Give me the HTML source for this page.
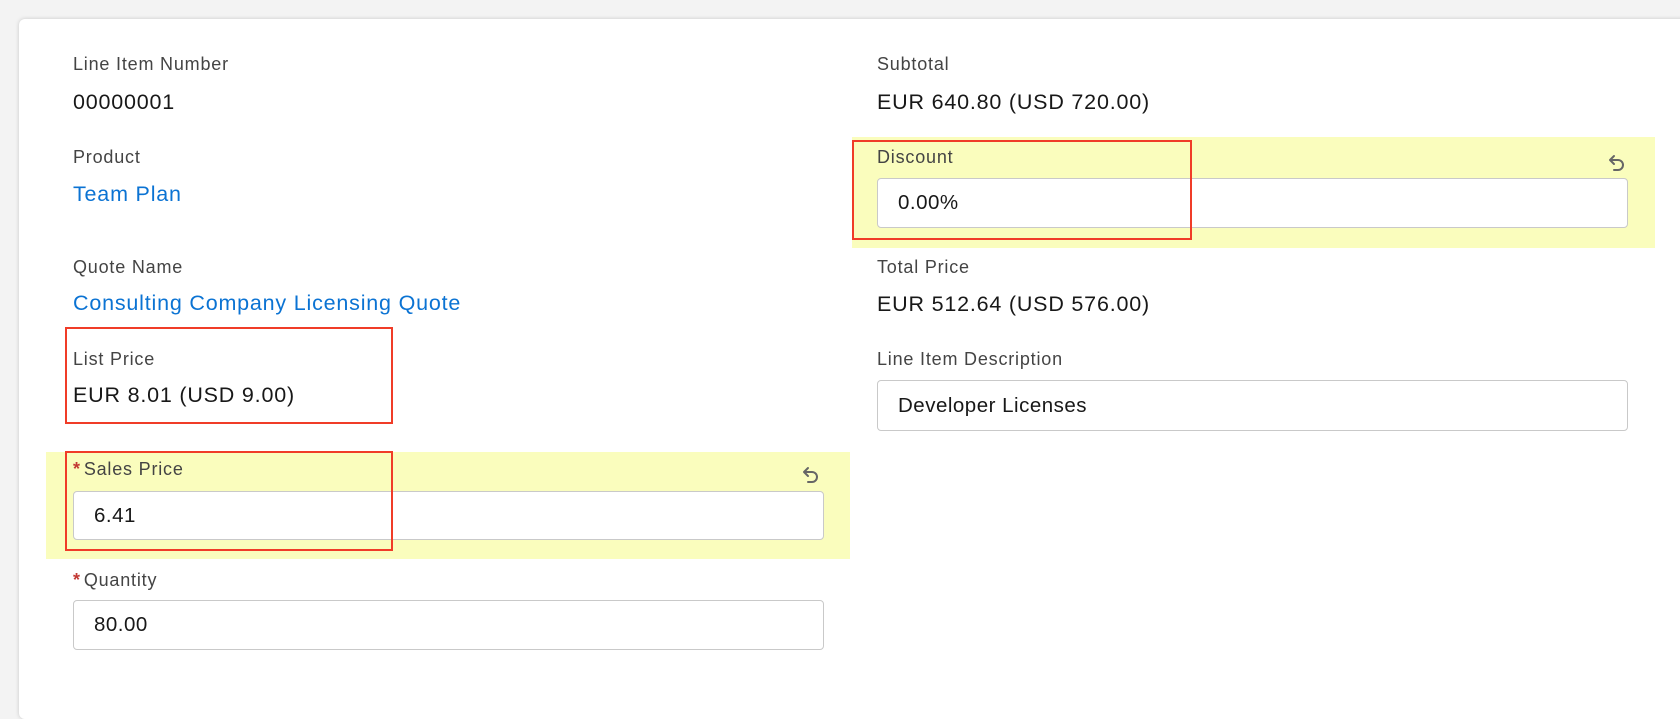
<!DOCTYPE html>
<html><head><style>
*{box-sizing:border-box;margin:0;padding:0}
body{width:1680px;height:682px;background:#f3f3f3;font-family:"Liberation Sans",sans-serif;position:relative;overflow:hidden}
.card{position:absolute;left:19px;top:19px;width:1680px;height:700px;background:#fff;border-radius:6px;box-shadow:0 0 4px rgba(0,0,0,.18)}
.a{position:absolute}
.lbl{font-size:18px;color:#444;line-height:20px;letter-spacing:0.8px}
.val{font-size:21.5px;color:#181818;line-height:24px;letter-spacing:0.8px}
.lnk{font-size:21.5px;color:#0b73d3;line-height:24px;letter-spacing:0.8px}
.hl{position:absolute;background:#fafdbd}
.inp{position:absolute;background:#fff;border:1px solid #c9c9c9;border-radius:4px;font-size:20.5px;letter-spacing:0.5px;color:#181818;padding-left:20px;display:flex;align-items:center}
.red{position:absolute;border:2px solid #f03c28}
.star{color:#c23934;font-size:18px;font-weight:bold;margin-right:3px}
</style></head><body>
<div class="card"></div>
<div class="hl" style="left:46px;top:452px;width:804px;height:107px"></div>
<div class="hl" style="left:852px;top:137px;width:803px;height:111px"></div>

<div class="a lbl" style="left:73px;top:54px">Line Item Number</div>
<div class="a val" style="left:73px;top:90px">00000001</div>
<div class="a lbl" style="left:73px;top:147px">Product</div>
<div class="a lnk" style="left:73px;top:182px">Team Plan</div>
<div class="a lbl" style="left:73px;top:257px">Quote Name</div>
<div class="a lnk" style="left:73px;top:291px">Consulting Company Licensing Quote</div>
<div class="a lbl" style="left:73px;top:349px">List Price</div>
<div class="a val" style="left:73px;top:383px">EUR 8.01 (USD 9.00)</div>
<div class="a lbl" style="left:73px;top:459px"><span class="star">*</span>Sales Price</div>
<div class="inp" style="left:73px;top:491px;width:751px;height:49px">6.41</div>
<div class="a lbl" style="left:73px;top:570px"><span class="star">*</span>Quantity</div>
<div class="inp" style="left:73px;top:600px;width:751px;height:50px">80.00</div>

<div class="a lbl" style="left:877px;top:54px">Subtotal</div>
<div class="a val" style="left:877px;top:90px">EUR 640.80 (USD 720.00)</div>
<div class="a lbl" style="left:877px;top:147px">Discount</div>
<div class="inp" style="left:877px;top:178px;width:751px;height:50px">0.00%</div>
<div class="a lbl" style="left:877px;top:257px">Total Price</div>
<div class="a val" style="left:877px;top:292px">EUR 512.64 (USD 576.00)</div>
<div class="a lbl" style="left:877px;top:349px">Line Item Description</div>
<div class="inp" style="left:877px;top:380px;width:751px;height:51px">Developer Licenses</div>

<svg class="a" style="left:1606px;top:152px" width="22" height="22" viewBox="0 0 22 22"><path d="M8 4 L4 8 L8 12 M4 8 H12 A5 5 0 0 1 12 18 H8" fill="none" stroke="#666" stroke-width="2" stroke-linecap="round" stroke-linejoin="round"/></svg>
<svg class="a" style="left:800px;top:464px" width="22" height="22" viewBox="0 0 22 22"><path d="M8 4 L4 8 L8 12 M4 8 H12 A5 5 0 0 1 12 18 H8" fill="none" stroke="#666" stroke-width="2" stroke-linecap="round" stroke-linejoin="round"/></svg>

<div class="red" style="left:852px;top:140px;width:340px;height:100px"></div>
<div class="red" style="left:65px;top:327px;width:328px;height:97px"></div>
<div class="red" style="left:65px;top:451px;width:328px;height:100px"></div>
</body></html>
